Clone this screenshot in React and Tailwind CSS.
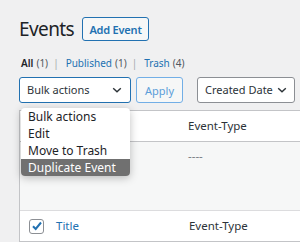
import React from "react";

const Chevron = () => (
  <svg width="10" height="6" viewBox="0 0 10 6" className="shrink-0">
    <path d="M1.2 1.2l3.8 3.6 3.8-3.6" fill="none" stroke="#2c3338" strokeWidth="1.4" />
  </svg>
);

export default function App() {
  return (
    <div
      className="relative w-[300px] h-[242px] overflow-hidden bg-[#f0f0f1] text-[#1d2327]"
      style={{ fontFamily: '"Noto Sans", "Open Sans", sans-serif' }}
    >
      <div className="flex items-center pl-[19px] pt-[17px] h-[41px]">
        <h1 className="text-[19px] leading-[24px] font-normal tracking-[-0.6px] text-[#1d2327]">Events</h1>
        <button className="ml-[8px] w-[67px] h-[24px] border border-[#2271b1] rounded-[3px] bg-[#f6f7f7] text-[#2271b1] text-[11px] tracking-[-0.2px] font-semibold leading-none">
          Add Event
        </button>
      </div>
      <div className="flex items-center pl-[21px] mt-[16px] h-[12px] text-[10px] leading-none text-[#50575e] whitespace-nowrap">
        <span className="font-semibold text-[#1d2327]">All</span>
        <span className="ml-[3px]">(1)</span>
        <span className="ml-[5px] mr-[7px] text-[#a7aaad]">|</span>
        <span className="text-[#2271b1]">Published</span>
        <span className="ml-[3px]">(1)</span>
        <span className="ml-[5px] mr-[7px] text-[#a7aaad]">|</span>
        <span className="text-[#2271b1]">Trash</span>
        <span className="ml-[3px]">(4)</span>
      </div>
      <div className="flex items-center pl-[19px] mt-[8px] h-[26px]">
        <div className="w-[112px] h-[26px] border border-[#2271b1] rounded-[3px] bg-white flex items-center justify-between pl-[7px] pr-[8px] text-[11px] text-[#2c3338]">
          <span>Bulk actions</span>
          <Chevron />
        </div>
        <button className="ml-[5px] w-[47px] h-[26px] border border-[#72aee6] rounded-[3px] bg-[#f6f7f7] text-[#5b9dd9] text-[11px] leading-none">
          Apply
        </button>
        <div className="ml-[14px] w-[98px] h-[26px] border border-[#8c8f94] rounded-[3px] bg-white flex items-center justify-between pl-[7px] pr-[7px] text-[11px] text-[#2c3338] whitespace-nowrap">
          <span>Created Date</span>
          <Chevron />
        </div>
      </div>
      <div className="ml-[19px] mt-[7px] w-[300px] border border-[#c3c4c7] bg-white">
        <div className="h-[31px] flex items-center border-b border-[#c3c4c7] text-[11.5px] text-[#2c3338]">
          <span className="ml-[168px]">Event-Type</span>
        </div>
        <div className="h-[69px] pt-[6px] bg-[#f6f7f7] border-b border-[#dcdcde] text-[11.5px] text-[#787c82]">
          <span className="block ml-[168px] leading-[16px]">----</span>
        </div>
        <div className="h-[30px] flex items-center text-[11.5px]">
          <div className="ml-[9px] w-[15px] h-[15px] border border-[#8c8f94] rounded-[3px] bg-white flex items-center justify-center">
            <svg width="12" height="12" viewBox="0 0 12 12">
              <path d="M2 6.2l2.7 2.8L10 2.5" fill="none" stroke="#2271b1" strokeWidth="2" />
            </svg>
          </div>
          <span className="ml-[12px] text-[#2271b1]">Title</span>
          <span className="ml-[110px] text-[#2c3338]">Event-Type</span>
        </div>
      </div>
      <div className="absolute left-[21px] top-[108px] w-[109px] h-[68px] bg-white rounded-[4px] shadow-[0_2px_8px_rgba(0,0,0,0.25)] overflow-hidden text-[12px] leading-[17px] text-[#1d2327]">
        <div className="h-[17px] pl-[7px]">Bulk actions</div>
        <div className="h-[17px] pl-[7px]">Edit</div>
        <div className="h-[17px] pl-[7px]">Move to Trash</div>
        <div className="h-[17px] pl-[7px] bg-[#707070] text-white">Duplicate Event</div>
      </div>
    </div>
  );
}
